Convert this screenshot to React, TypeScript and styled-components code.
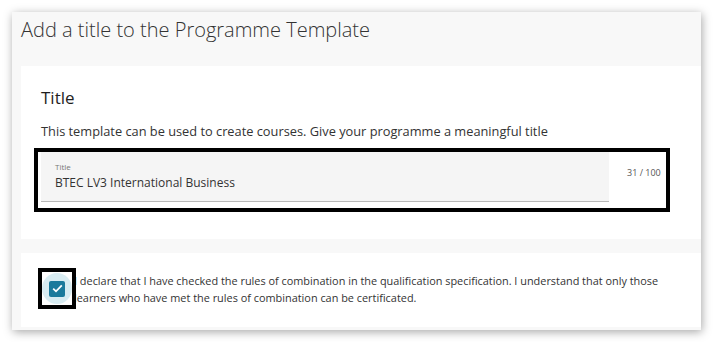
import { createGlobalStyle, styled } from 'styled-components';

const GlobalStyle = createGlobalStyle`
  html, body {
    margin: 0;
    padding: 0;
    background: #fff;
    font-family: "Open Sans", "Noto Sans", "Liberation Sans", sans-serif;
    color: #333;
  }
`;

const Panel = styled.div`
  margin: 12px;
  width: 689px;
  background: #f8f8f8;
  box-shadow: 1px 2px 9px rgba(0, 0, 0, 0.35);
  padding-bottom: 3px;
`;

const PageTitle = styled.h1`
  margin: 0;
  padding: 4px 0 0 9px;
  height: 50px;
  font-size: 20px;
  line-height: 28px;
  font-weight: 300;
  color: #333;
`;

const Body = styled.div`
  margin-left: 9px;
  display: flex;
  flex-direction: column;
  gap: 14px;
`;

const Card = styled.section<{ $pad: string }>`
  background: #fff;
  padding: ${({ $pad }) => $pad};
`;

const CardHeading = styled.h2`
  margin: 0;
  font-size: 17px;
  line-height: 24px;
  font-weight: 400;
  color: #1e1e1e;
`;

const Hint = styled.p`
  margin: 12px 0 8px;
  font-size: 12.8px;
  line-height: 18px;
  color: #333;
`;

// black outline drawn round the field and its counter
const FieldRow = styled.div`
  display: flex;
  align-items: flex-start;
  margin-left: -7px;
  padding: 0 3px 6px;
  border: 4px solid #000;
  box-sizing: content-box;
  width: 622px;
`;

const Field = styled.label`
  display: flex;
  flex-direction: column;
  width: 554px;
  height: 49px;
  padding: 0 0 0 14px;
  background: #f5f5f5;
  border-bottom: 1px solid #b9b9b9;
`;

const FieldLabel = styled.span`
  margin-top: 9px;
  font-size: 8px;
  line-height: 11px;
  color: #777;
`;

const FieldValue = styled.span`
  margin-top: 2px;
  font-size: 12px;
  line-height: 17px;
  color: #333;
`;

const Counter = styled.span`
  margin: 14px 0 0 18px;
  font-size: 9px;
  line-height: 13px;
  color: #555;
  white-space: nowrap;
`;

const CheckRow = styled.div`
  display: flex;
  align-items: center;
`;

const CheckFrame = styled.div`
  position: relative;
  z-index: 1;
  flex: none;
  width: 30px;
  height: 33px;
  border: 4px solid #000;
  display: flex;
  align-items: center;
  justify-content: center;
  overflow: hidden;
  background: #fff;
`;

const Halo = styled.span`
  width: 31px;
  height: 31px;
  border-radius: 50%;
  background: #d8ecf2;
  display: flex;
  align-items: center;
  justify-content: center;
`;

const Box = styled.span`
  width: 16px;
  height: 16px;
  border-radius: 2px;
  background: #1b7a9c;
  display: flex;
  align-items: center;
  justify-content: center;
`;

const CheckText = styled.p`
  margin: 0 0 0 -2px;
  font-size: 10.9px;
  line-height: 17px;
  color: #333;
`;

export default function App() {
  return (
    <>
      <GlobalStyle />
      <Panel>
        <PageTitle>Add a title to the Programme Template</PageTitle>
        <Body>
          <Card $pad="20px 20px 27px">
            <CardHeading>Title</CardHeading>
            <Hint>This template can be used to create courses. Give your programme a meaningful title</Hint>
            <FieldRow>
              <Field>
                <FieldLabel>Title</FieldLabel>
                <FieldValue>BTEC LV3 International Business</FieldValue>
              </Field>
              <Counter>31 / 100</Counter>
            </FieldRow>
          </Card>
          <Card $pad="15px 20px 18px 17px">
            <CheckRow>
              <CheckFrame>
                <Halo>
                  <Box>
                    <svg width="11" height="9" viewBox="0 0 11 9">
                      <path d="M1.2 4.6 L4 7.3 L9.8 1.4" fill="none" stroke="#fff" strokeWidth="1.8" />
                    </svg>
                  </Box>
                </Halo>
              </CheckFrame>
              <CheckText>
                I declare that I have checked the rules of combination in the qualification specification. I understand that only those
                <br />
                learners who have met the rules of combination can be certificated.
              </CheckText>
            </CheckRow>
          </Card>
        </Body>
      </Panel>
    </>
  );
}
